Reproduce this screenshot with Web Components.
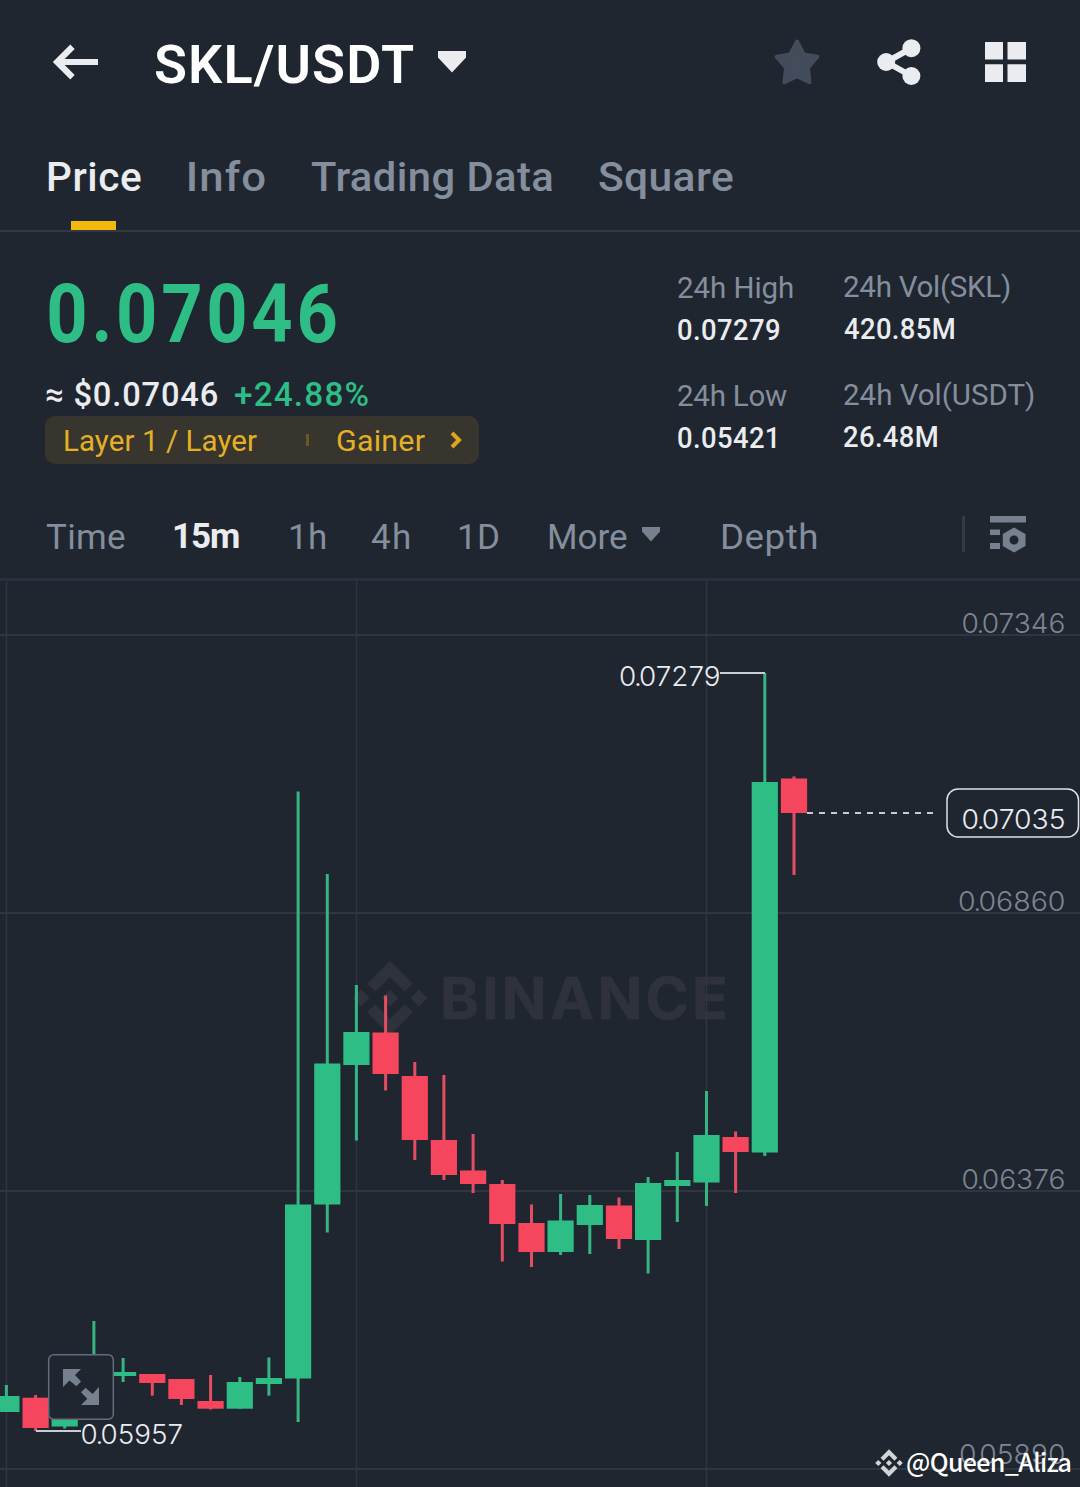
<!DOCTYPE html>
<html lang="en">
<head>
<meta charset="utf-8">
<title>SKL/USDT</title>
<style>
  :root {
    --bg: #1f2630;
    --line: #323843;
    --text: #eaecef;
    --muted: #848e9c;
    --green: #2ebd85;
    --red: #f6465d;
    --yellow: #f0b90b;
  }
  body {
    margin: 0;
    background: var(--bg);
    color: var(--text);
    font-family: Roboto, "Liberation Sans", sans-serif;
    overflow: hidden;
  }
</style>
</head>
<body>
<trade-page></trade-page>

<script>
// Text set to an exact ink width: spreads or tightens the letters to fill w
class FitText extends HTMLElement {
  constructor() {
    super();
    this.attachShadow({ mode: 'open' });
    this.shadowRoot.innerHTML = `
      <style>
        :host { display: block; flex: none; }
        span { display: block; width: max-content; white-space: pre; transform-origin: 0 50%; }
      </style>
      <span><slot></slot></span>
    `;
  }

  connectedCallback() {
    const text = this.textContent;
    const width = Number(this.getAttribute('w'));
    const scale = Number(this.getAttribute('scale') || 1);
    const ctx = document.createElement('canvas').getContext('2d');
    ctx.font = getComputedStyle(this).font;
    const m = ctx.measureText(text);
    const ink = m.actualBoundingBoxLeft + m.actualBoundingBoxRight;
    const spacing = (width / scale - ink) / (text.length - 1);
    const span = this.shadowRoot.querySelector('span');
    this.style.width = width + 'px';
    span.style.letterSpacing = spacing.toFixed(3) + 'px';
    span.style.transform = `translateX(${(m.actualBoundingBoxLeft * scale).toFixed(2)}px) scaleX(${scale})`;
  }
}

class TopBar extends HTMLElement {
  constructor() {
    super();
    this.attachShadow({ mode: 'open' });
    this.shadowRoot.innerHTML = `
      <style>
        :host { display: flex; align-items: center; height: 124px; padding: 0 54px 0 52px; }
        svg { display: block; flex: none; fill: var(--text); }
        .title { margin: 5px 24px 0 57px; font-size: 54px; font-weight: 600; line-height: 64px; color: #fff; }
        .star { margin-left: auto; fill: #434c5a; stroke: #434c5a; }
        .share { margin: 0 64px 0 57px; }
      </style>
      <svg width="46" height="36" viewBox="0 0 46 36"><path d="M18.3.6 22.7 5 12.7 15H46v6H12.7l10 10-4.4 4.4L.8 18z"/></svg>
      <fit-text class="title" w="259">SKL/USDT</fit-text>
      <svg width="28" height="22" viewBox="0 0 28 22"><path d="M0 0h28v6.5L14 21.5 0 6.5z"/></svg>
      <svg class="star" width="46" height="48" viewBox="0 0 46 48"><path d="M23 3.5 29.7 16.5 43.3 18.7 34 29.6 35.5 44.2 23 38.3 10.5 44.2 12 29.6 2.7 18.7 16.3 16.5z" stroke-width="4" stroke-linejoin="round"/></svg>
      <svg class="share" width="44" height="46" viewBox="0 0 44 46"><path d="M34.5 9.2 9.3 23l25.2 14" fill="none" stroke="#eaecef" stroke-width="6"/><circle cx="34.4" cy="9.2" r="9"/><circle cx="9.2" cy="23" r="9"/><circle cx="34.4" cy="37" r="9"/></svg>
      <svg width="41" height="40" viewBox="0 0 41 40"><path d="M0 0h18v17.5H0zM22.5 0H41v17.5H22.5zM0 22.3h18V40H0zM22.5 22.3H41V40H22.5z"/></svg>
    `;
  }
}

class PageTabs extends HTMLElement {
  constructor() {
    super();
    this.attachShadow({ mode: 'open' });
    this.shadowRoot.innerHTML = `
      <style>
        :host {
          display: flex;
          gap: 46px;
          height: 106px;
          padding-left: 48px;
          border-bottom: 2px solid var(--line);
          font-size: 40.5px;
          font-weight: 500;
          line-height: 107px;
          color: var(--muted);
        }
        .active { color: var(--text); }
        .tab { display: grid; justify-items: center; grid-template-rows: 97px 9px; }
        .mark { width: 45px; margin-left: -2px; background: var(--yellow); }
      </style>
      <div class="tab">
        <fit-text class="active" w="93">Price</fit-text>
        <div class="mark"></div>
      </div>
      <fit-text w="76" scale="1.08" style="margin-left: 2px">Info</fit-text>
      <fit-text w="242" scale="1.03">Trading Data</fit-text>
      <fit-text w="134" scale="1.05">Square</fit-text>
    `;
  }
}

class PriceTags extends HTMLElement {
  constructor() {
    super();
    this.attachShadow({ mode: 'open' });
    this.shadowRoot.innerHTML = `
      <style>
        :host {
          display: flex;
          align-items: center;
          box-sizing: border-box;
          width: 434px;
          height: 48px;
          padding-left: 20px;
          border-radius: 10px;
          background: #37352d;
          color: #e4b126;
          font-size: 29.5px;
          line-height: 48px;
        }
        fit-text { margin-top: 1px; }
        i { width: 3px; height: 12px; margin: 0 28px 0 49px; background: #6b5723; }
        svg { margin-left: 25px; }
      </style>
      <fit-text w="192">Layer 1 / Layer</fit-text>
      <i></i>
      <fit-text w="88" scale="1.03">Gainer</fit-text>
      <svg width="12" height="18" viewBox="0 0 12 18"><path d="m2 2 7 7-7 7" fill="none" stroke="#dda81f" stroke-width="4"/></svg>
    `;
  }
}

class StatItem extends HTMLElement {
  constructor() {
    super();
    this.attachShadow({ mode: 'open' });
    this.shadowRoot.innerHTML = `
      <style>
        :host { display: block; font-size: 29.5px; line-height: 42px; }
        ::slotted([slot=label]) { color: var(--muted); }
        ::slotted([slot=value]) { color: var(--text); }
      </style>
      <slot name="label"></slot>
      <slot name="value"></slot>
    `;
  }
}

class PriceSummary extends HTMLElement {
  constructor() {
    super();
    this.attachShadow({ mode: 'open' });
    this.shadowRoot.innerHTML = `
      <style>
        :host { display: flex; box-sizing: border-box; height: 265px; padding-left: 45px; }
        .main { width: 633px; padding-top: 41px; }
        .last { margin-left: 4px; font-size: 82px; font-weight: 700; line-height: 82px; color: var(--green); }
        .sub { display: flex; gap: 18px; margin: 17px 0 0 1px; font-size: 34px; font-weight: 500; line-height: 44px; }
        .up { color: var(--green); }
        .stats { display: grid; grid-template-columns: 166px 200px; row-gap: 24px; align-content: start; padding-top: 35px; }
        .right { margin-top: -1px; }
        [slot=value] { font-weight: 500; }
      </style>
      <div class="main">
        <fit-text class="last" w="287" scale="0.88">0.07046</fit-text>
        <div class="sub">
          <fit-text w="171" scale="0.96">≈ $0.07046</fit-text>
          <fit-text class="up" w="133" scale="0.98">+24.88%</fit-text>
        </div>
        <price-tags></price-tags>
      </div>
      <div class="stats">
        <stat-item><fit-text slot="label" w="115">24h High</fit-text><fit-text slot="value" w="102" scale="0.93">0.07279</fit-text></stat-item>
        <stat-item class="right"><fit-text slot="label" w="166">24h Vol(SKL)</fit-text><fit-text slot="value" w="110" scale="0.93">420.85M</fit-text></stat-item>
        <stat-item><fit-text slot="label" w="109">24h Low</fit-text><fit-text slot="value" w="98" scale="0.93">0.05421</fit-text></stat-item>
        <stat-item class="right"><fit-text slot="label" w="190">24h Vol(USDT)</fit-text><fit-text slot="value" w="93" scale="0.93">26.48M</fit-text></stat-item>
      </div>
    `;
  }
}

class IntervalBar extends HTMLElement {
  constructor() {
    super();
    this.attachShadow({ mode: 'open' });
    this.shadowRoot.innerHTML = `
      <style>
        :host {
          display: flex;
          align-items: center;
          height: 81px;
          padding: 0 54px 0 46px;
          border-bottom: 3px solid #2b313c;
          font-size: 35px;
          line-height: 80px;
          color: var(--muted);
        }
        .active { margin: -2px 51px 0 49px; font-weight: 700; color: var(--text); }
        .hour { margin-left: 46px; }
        .day { margin: 0 51px 0 50px; }
        .caret { margin: 0 62px 7px 15px; }
        .sep { width: 3px; height: 36px; margin: 0 25px 8px auto; background: #343b47; }
        .settings { margin-bottom: 6px; }
        svg { fill: #76808f; }
      </style>
      <fit-text w="79">Time</fit-text>
      <fit-text class="active" w="65">15m</fit-text>
      <fit-text w="35">1h</fit-text>
      <fit-text class="hour" w="38">4h</fit-text>
      <fit-text class="day" w="39">1D</fit-text>
      <fit-text w="78">More</fit-text>
      <svg class="caret" width="18" height="15" viewBox="0 0 18 15"><path d="M0 0h18v4.5L9 14.5 0 4.5z"/></svg>
      <fit-text w="94" scale="1.05">Depth</fit-text>
      <div class="sep"></div>
      <svg class="settings" width="36" height="37" viewBox="0 0 36 37"><path d="M0 0h36v6.500H0zM0 13.500h10V19H0zM0 27h10v6H0z"/><path d="M24 11.500 35.500 18v12L24 36.500 12.800 30V18zm0 8a4.500 4.500 0 1 0 0 9 4.500 4.500 0 0 0 0-9z" fill-rule="evenodd"/></svg>
    `;
  }
}

// wick top, body top, body bottom, wick bottom, up/down
const CANDLES = [
  [1385, 1396, 1412, 1412, 'u'],
  [1395, 1397.7, 1428, 1431, 'd'],
  [1398, 1400, 1426.5, 1428.5, 'u'],
  [1321, 1374, 1400, 1402, 'u'],
  [1358, 1372, 1376, 1382, 'u'],
  [1374, 1374, 1383, 1395.7, 'd'],
  [1379, 1379, 1399, 1405, 'd'],
  [1375, 1401, 1408.7, 1409.5, 'd'],
  [1377, 1382, 1408.7, 1408.7, 'u'],
  [1357.5, 1378, 1384, 1395.7, 'u'],
  [791.5, 1204.5, 1378.5, 1422, 'u'],
  [874, 1063.5, 1204.5, 1232.5, 'u'],
  [985, 1032, 1065, 1140.5, 'u'],
  [995.5, 1032.5, 1074, 1090.5, 'd'],
  [1062, 1076, 1140, 1160, 'd'],
  [1075, 1140, 1175, 1180, 'd'],
  [1134, 1170.5, 1184, 1193, 'd'],
  [1180, 1184, 1224, 1261.5, 'd'],
  [1204.5, 1223, 1252, 1267, 'd'],
  [1194, 1220.5, 1252, 1255, 'u'],
  [1195, 1205, 1225, 1254, 'u'],
  [1197.5, 1205.5, 1239, 1249, 'd'],
  [1177, 1183, 1240, 1273.5, 'u'],
  [1152, 1180, 1186, 1222, 'u'],
  [1091, 1135, 1182.5, 1206, 'u'],
  [1131.5, 1137, 1152, 1193, 'd'],
  [673, 782, 1152.5, 1156, 'u'],
  [776.5, 778.5, 813, 875, 'd'],
];

class CandleChart extends HTMLElement {
  constructor() {
    super();
    this.attachShadow({ mode: 'open' });
  }

  connectedCallback() {
    this.render();
  }

  candles() {
    return CANDLES.map(([high, top, bottom, low, dir], i) => {
      const x = 6.4 + i * 29.17;
      return `<g class="${dir}">
        <rect class="wick" x="${(x - 1.5).toFixed(1)}" y="${high}" width="3" height="${low - high}"/>
        <rect x="${(x - 13.1).toFixed(1)}" y="${top}" width="26.2" height="${bottom - top}"/>
      </g>`;
    }).join('');
  }

  // Price text, its glyphs widened to len, the point pulled in on both sides
  price(x, y, len, text, cls = '') {
    return `<text class="price ${cls}" x="${x}" y="${y}" dx="0 -1.5 -2" textLength="${len}" lengthAdjust="spacingAndGlyphs">${text}</text>`;
  }

  render() {
    const logo = `
      <path d="M0-37 22.7-14.3 14.7-6.3 0-21-14.7-6.3-22.7-14.3zM0 37 22.7 14.3 14.7 6.3 0 21-14.7 6.3-22.7 14.3z"/>
      <path d="M0-8.4 8.4 0 0 8.4-8.4 0zM-28.9-8.4-20.5 0-28.9 8.4-37.3 0zM28.9-8.4 37.3 0 28.9 8.4 20.5 0z"/>
    `;
    this.shadowRoot.innerHTML = `
      <style>
        :host { display: block; height: 906px; }
        svg { display: block; }
        .grid { stroke: #303640; stroke-width: 2; }
        .vert { stroke-width: 1.5; }
        .mark { fill: #2f323d; }
        .mark text { font: 700 58px Inter, sans-serif; letter-spacing: 3px; stroke: #2f323d; stroke-width: .6; }
        .u { fill: var(--green); }
        .d { fill: var(--red); }
        .u .wick { fill: #36b583; }
        .d .wick { fill: #e34e62; }
        .price { font: 300 26.5px Inter, "Liberation Sans", sans-serif; fill: var(--text); }
        .axis { fill: #7d8592; }
        .lead { stroke: #c9ccd1; stroke-width: 2; }
        .user { font: 500 25px "Noto Sans CJK SC", sans-serif; fill: #fff; }
      </style>
      <svg width="1080" height="906" viewBox="0 581 1080 906">
        <g class="mark">
          <g transform="translate(390 998)">${logo}</g>
          <text x="440" y="1019" textLength="291" lengthAdjust="spacingAndGlyphs">BINANCE</text>
        </g>
        <path class="grid" d="M0 635H1080M0 913H1080M0 1191H1080M0 1469H1080"/>
        <path class="grid vert" d="M6.5 581V1487M356.5 581V1487M706.5 581V1487"/>
        ${this.candles()}
        <path class="lead" d="M720 673H765M36 1431H81"/>
        <path class="lead" d="M807 813H935" stroke-dasharray="6 6"/>
        <rect x="947" y="789" width="131.5" height="48" rx="11" fill="none" stroke="#e0e2e5" stroke-width="1.5"/>
        ${this.price(619, 685.5, 101.5, '0.07279')}
        ${this.price(80.5, 1443.5, 102.5, '0.05957')}
        ${this.price(961.5, 828.5, 104, '0.07035')}
        ${this.price(961.5, 632.5, 104, '0.07346', 'axis')}
        ${this.price(958, 910.5, 107.5, '0.06860', 'axis')}
        ${this.price(961.5, 1188.5, 104, '0.06376', 'axis')}
        ${this.price(959, 1463.5, 106.5, '0.05890', 'axis')}
        <g transform="translate(48 1354)">
          <rect x=".7" y=".7" width="64.6" height="64.6" rx="5" fill="#1f2630" stroke="#646d7c" stroke-width="1.5"/>
          <path d="M15 15h18l-6 6 6 6.500-4.500 4.800L21.500 26.500 15 33zM51 51H33l6.300-6.300-6.300-6.500 4.500-4.500 7 6.300 6.500-7z" fill="#76808f"/>
        </g>
        <g transform="translate(889 1463) scale(.37)" fill="#d3d4d6">${logo}</g>
        <text class="user" x="906" y="1472" textLength="166">@Queen_Aliza</text>
      </svg>
    `;
  }
}

class TradePage extends HTMLElement {
  constructor() {
    super();
    this.attachShadow({ mode: 'open' });
    this.shadowRoot.innerHTML = `
      <style>
        :host { display: flex; flex-direction: column; width: 1080px; height: 1487px; overflow: hidden; }
      </style>
      <top-bar></top-bar>
      <page-tabs></page-tabs>
      <price-summary></price-summary>
      <interval-bar></interval-bar>
      <candle-chart></candle-chart>
    `;
  }
}

customElements.define('fit-text', FitText);
customElements.define('top-bar', TopBar);
customElements.define('page-tabs', PageTabs);
customElements.define('price-tags', PriceTags);
customElements.define('stat-item', StatItem);
customElements.define('price-summary', PriceSummary);
customElements.define('interval-bar', IntervalBar);
customElements.define('candle-chart', CandleChart);
customElements.define('trade-page', TradePage);
</script>
</body>
</html>
